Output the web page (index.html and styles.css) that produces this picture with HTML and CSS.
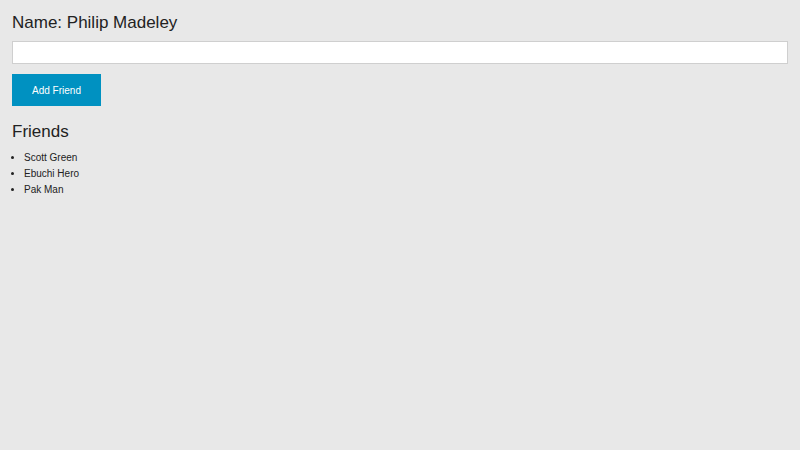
FILE: index.html
```html
<!DOCTYPE html>
<html>
<head>
<meta charset="utf-8">
<link rel="stylesheet" href="styles.css">
</head>
<body>
<div class="page">
  <h1 class="name">Name: Philip Madeley</h1>
  <input class="field" type="text">
  <button class="add">Add Friend</button>
  <h2 class="friends">Friends</h2>
  <ul class="list">
    <li>Scott Green</li>
    <li>Ebuchi Hero</li>
    <li>Pak Man</li>
  </ul>
</div>
</body>
</html>
```
FILE: styles.css
```css
html, body {
  margin: 0;
  padding: 0;
  background: #e8e8e8;
  font-family: "Liberation Sans", Arial, sans-serif;
  color: #222;
}
.page {
  padding: 12px 12px;
  display: flex;
  flex-direction: column;
  align-items: flex-start;
}
.name {
  font-size: 17px;
  font-weight: normal;
  margin: 0;
  line-height: 22px;
  height: 29px;
}
.field {
  box-sizing: border-box;
  width: 100%;
  height: 23px;
  margin: 0;
  border: 1px solid #cfcfcf;
  background: #fff;
  padding: 0 4px;
}
.add {
  margin-top: 10px;
  width: 89px;
  height: 32px;
  border: none;
  background: #0091c1;
  color: #fff;
  font-family: "Liberation Sans", Arial, sans-serif;
  font-size: 10px;
  padding: 0;
}
.friends {
  font-size: 17px;
  font-weight: normal;
  margin: 15px 0 0;
  line-height: 22px;
}
.list {
  margin: 7px 0 0;
  padding-left: 12px;
  font-size: 10px;
  line-height: 16px;
}
```
